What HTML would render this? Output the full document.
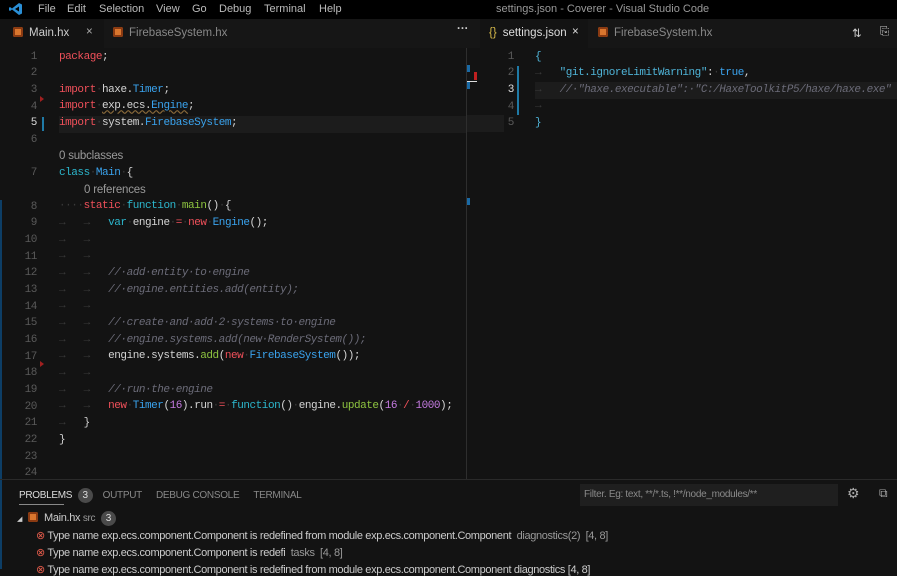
<!DOCTYPE html>
<html><head><meta charset="utf-8"><style>
*{margin:0;padding:0;box-sizing:border-box}
body{width:897px;height:569px;background:#131313;overflow:hidden;position:relative;font-family:"Liberation Sans",sans-serif;color:#ccc}
.abs{position:absolute}
.title{left:0;top:0;width:897px;height:19px;background:#000;font-size:11px;color:#bbb}
.title span{position:absolute;top:3px}
.tabs{left:0;top:19px;width:897px;height:29px;background:#161616;font-size:11.5px;color:#888}
.code{font-family:"Liberation Mono",monospace;font-size:11px;letter-spacing:-0.46px;white-space:pre;line-height:16.67px;height:16.67px}
.ln{font-family:"Liberation Mono",monospace;font-size:11px;color:#5a5a5a;text-align:right;width:30px;line-height:16.67px;letter-spacing:-0.4px}
.k{color:#f0505a}.c{color:#2cb6cc}.t{color:#3aa3ee}.g{color:#8ec440}.n{color:#c47ae0}.cm{color:#6b6b78;font-style:italic}.w{color:#3a3a3a}.p{color:#d4d4d4}.s{color:#4fb4d8}
.lens{font-size:11.5px;color:#9a9a9a;line-height:16.67px;height:16.67px;letter-spacing:-0.2px}
.hx{display:inline-block;width:10px;height:10px;background:#d9762e;border-radius:2px;vertical-align:-1px;margin-right:6px;box-shadow:inset 0 0 0 2px #8a3a12}
.err{font-size:11px;letter-spacing:-0.35px;color:#ccc;white-space:nowrap}
</style></head><body>
<div class="abs title">
<svg class="abs" style="left:9px;top:2px" width="14" height="14" viewBox="0 0 14 14"><path d="M10 1l3 1.5v9L10 13 3 7.5 1 9 0 8.3V5.7L1 5l2 1.5zM10 4.5L6 7l4 2.5z" fill="#2a8fd6"/></svg>
<span style="left:38px">File</span><span style="left:67px">Edit</span><span style="left:99px">Selection</span><span style="left:156px">View</span><span style="left:192px">Go</span><span style="left:219px">Debug</span><span style="left:264px">Terminal</span><span style="left:319px">Help</span>
<span style="left:496px;color:#999">settings.json - Coverer - Visual Studio Code</span>
</div>
<div class="abs tabs">
<div class="abs" style="left:0;top:0;width:104px;height:29px;background:#131313"></div>
<span class="abs" style="left:13px;top:8px;color:#ccc"><i class="hx"></i>Main.hx</span>
<span class="abs" style="left:86px;top:7px;color:#aaa">×</span>
<span class="abs" style="left:113px;top:8px"><i class="hx"></i>FirebaseSystem.hx</span>
<span class="abs" style="left:457px;top:4px;color:#ccc;font-weight:bold">···</span>
<div class="abs" style="left:480px;top:0;width:108px;height:29px;background:#131313"></div>
<span class="abs" style="left:489px;top:8px;color:#ddd"><b style="color:#d6b94a;font-weight:normal;margin-right:6px">{}</b>settings.json</span>
<span class="abs" style="left:572px;top:7px;color:#ddd">×</span>
<span class="abs" style="left:598px;top:8px"><i class="hx"></i>FirebaseSystem.hx</span>
<span class="abs" style="left:852px;top:7px;color:#ccc">⇅</span>
<span class="abs" style="left:880px;top:7px;color:#ccc">⎘</span>
</div>
<div class="abs" style="left:466px;top:48px;width:1px;height:431px;background:#2e2e2e"></div>
<div class="abs" style="left:0;top:200px;width:2px;height:369px;background:#0d3e66"></div>
<div class="abs" style="left:59px;top:115.5px;width:407px;height:17px;background:#1c1c1c"></div>
<div class="abs" style="left:42px;top:117px;width:2px;height:14px;background:#1f7aa6"></div>
<div class="abs" style="left:467px;top:65px;width:3px;height:7px;background:#1a6aa5"></div>
<div class="abs" style="left:474px;top:72px;width:3px;height:8px;background:#c02020"></div>
<div class="abs" style="left:467px;top:81px;width:10px;height:1px;background:#ddd"></div>
<div class="abs" style="left:467px;top:82px;width:3px;height:7px;background:#1a6aa5"></div>
<div class="abs" style="left:467px;top:198px;width:3px;height:7px;background:#1a6aa5"></div>
<div class="abs" style="left:40px;top:96px;width:0;height:0;border-left:4px solid #a02020;border-top:3px solid transparent;border-bottom:3px solid transparent"></div>
<div class="abs" style="left:40px;top:361px;width:0;height:0;border-left:4px solid #a02020;border-top:3px solid transparent;border-bottom:3px solid transparent"></div>
<div class="abs" style="left:7px;top:48.5px">
<div class="ln">1</div><div class="ln">2</div><div class="ln">3</div><div class="ln">4</div><div class="ln" style="color:#ddd">5</div><div class="ln">6</div><div class="ln" style="height:16.67px"></div><div class="ln">7</div><div class="ln" style="height:16.67px"></div><div class="ln">8</div><div class="ln">9</div><div class="ln">10</div><div class="ln">11</div><div class="ln">12</div><div class="ln">13</div><div class="ln">14</div><div class="ln">15</div><div class="ln">16</div><div class="ln">17</div><div class="ln">18</div><div class="ln">19</div><div class="ln">20</div><div class="ln">21</div><div class="ln">22</div><div class="ln">23</div><div class="ln">24</div>
</div>
<div class="abs p" style="left:59px;top:48.5px">
<div class="code"><span class="k">package</span>;</div>
<div class="code"> </div>
<div class="code"><span class="k">import</span><span class="w">·</span>haxe.<span class="t">Timer</span>;</div>
<div class="code"><span class="k">import</span><span class="w">·</span><span style="text-decoration:underline wavy #8a6a3a">exp.ecs.<span class="t">Engine</span></span>;</div>
<div class="code"><span class="k">import</span><span class="w">·</span>system.<span class="t">FirebaseSystem</span>;</div>
<div class="code"> </div>
<div class="lens">0 subclasses</div>
<div class="code"><span class="c">class</span><span class="w">·</span><span class="t">Main</span><span class="w">·</span>{</div>
<div class="lens" style="padding-left:25px">0 references</div>
<div class="code"><span class="w">····</span><span class="k">static</span><span class="w">·</span><span class="c">function</span><span class="w">·</span><span class="g">main</span>()<span class="w">·</span>{</div>
<div class="code"><span class="w">→   →   </span><span class="c">var</span><span class="w">·</span>engine<span class="w">·</span><span class="k">=</span><span class="w">·</span><span class="k">new</span><span class="w">·</span><span class="t">Engine</span>();</div>
<div class="code w">→   →</div>
<div class="code w">→   →</div>
<div class="code"><span class="w">→   →   </span><span class="cm">//·add·entity·to·engine</span></div>
<div class="code"><span class="w">→   →   </span><span class="cm">//·engine.entities.add(entity);</span></div>
<div class="code w">→   →</div>
<div class="code"><span class="w">→   →   </span><span class="cm">//·create·and·add·2·systems·to·engine</span></div>
<div class="code"><span class="w">→   →   </span><span class="cm">//·engine.systems.add(new·RenderSystem());</span></div>
<div class="code"><span class="w">→   →   </span>engine.systems.<span class="g">add</span>(<span class="k">new</span><span class="w">·</span><span class="t">FirebaseSystem</span>());</div>
<div class="code w">→   →</div>
<div class="code"><span class="w">→   →   </span><span class="cm">//·run·the·engine</span></div>
<div class="code"><span class="w">→   →   </span><span class="k">new</span><span class="w">·</span><span class="t">Timer</span>(<span class="n">16</span>).run<span class="w">·</span><span class="k">=</span><span class="w">·</span><span class="c">function</span>()<span class="w">·</span>engine.<span class="g">update</span>(<span class="n">16</span><span class="w">·</span><span class="k">/</span><span class="w">·</span><span class="n">1000</span>);</div>
<div class="code"><span class="w">→   </span>}</div>
<div class="code">}</div>
</div>
<div class="abs" style="left:467px;top:115px;width:37px;height:17px;background:#1c1c1c"></div>
<div class="abs" style="left:535px;top:82px;width:362px;height:17px;background:#1c1c1c"></div>
<div class="abs" style="left:517px;top:66px;width:2px;height:49px;background:#1f7aa6"></div>
<div class="abs" style="left:484px;top:48.5px">
<div class="ln">1</div><div class="ln">2</div><div class="ln" style="color:#ddd">3</div><div class="ln">4</div><div class="ln">5</div>
</div>
<div class="abs p" style="left:535px;top:48.5px">
<div class="code"><span class="s">{</span></div>
<div class="code"><span class="w">→   </span><span class="s">"git.ignoreLimitWarning"</span>:<span class="w">·</span><span class="t">true</span>,</div>
<div class="code"><span class="w">→   </span><span class="cm">//·"haxe.executable":·"C:/HaxeToolkitP5/haxe/haxe.exe"</span></div>
<div class="code w">→</div>
<div class="code"><span class="s">}</span></div>
</div>
<div class="abs" style="left:0;top:479px;width:897px;height:90px;background:#131313;border-top:1px solid #2a2a2a"></div>
<div class="abs" style="left:0;top:480px;width:2px;height:89px;background:#0d3e66"></div>
<div class="abs" style="top:488px;left:19px;font-size:10px;letter-spacing:-0.3px;color:#888;white-space:nowrap">
<span style="color:#ddd">PROBLEMS</span> <span style="display:inline-block;background:#4a4a4a;color:#ddd;border-radius:8px;width:15px;height:15px;text-align:center;line-height:15px;margin:0 10px 0 3px">3</span><span style="margin-right:14px">OUTPUT</span><span style="margin-right:14px">DEBUG CONSOLE</span>TERMINAL</div>
<div class="abs" style="left:19px;top:504px;width:45px;height:1px;background:#888"></div>
<div class="abs" style="left:580px;top:484px;width:258px;height:22px;background:#1f1f1f;font-size:10px;letter-spacing:-0.3px;color:#8a8a8a;padding:5px 4px">Filter. Eg: text, **/*.ts, !**/node_modules/**</div>
<span class="abs" style="left:847px;top:485px;color:#aaa;font-size:14px">⚙</span>
<span class="abs" style="left:879px;top:486px;color:#aaa;font-size:12px">⧉</span>
<div class="abs err" style="left:17px;top:511px"><span style="font-size:7px;margin-right:6px">◢</span><i class="hx"></i>Main.hx <span style="font-size:10px;color:#999">src</span> <span style="display:inline-block;background:#4a4a4a;color:#ddd;border-radius:8px;width:15px;height:15px;text-align:center;line-height:15px;font-size:10px;margin-left:3px">3</span></div>
<div class="abs err" style="left:36px;top:529px"><span style="color:#e05a4a">⊗</span> Type name exp.ecs.component.Component is redefined from module exp.ecs.component.Component&nbsp; <span style="color:#999">diagnostics(2)&nbsp; [4, 8]</span></div>
<div class="abs err" style="left:36px;top:546px"><span style="color:#e05a4a">⊗</span> Type name exp.ecs.component.Component is redefi&nbsp; <span style="color:#999">tasks&nbsp; [4, 8]</span></div>
<div class="abs err" style="left:36px;top:563px"><span style="color:#e05a4a">⊗</span> Type name exp.ecs.component.Component is redefined from module exp.ecs.component.Component diagnostics [4, 8]</div>
</body></html>
